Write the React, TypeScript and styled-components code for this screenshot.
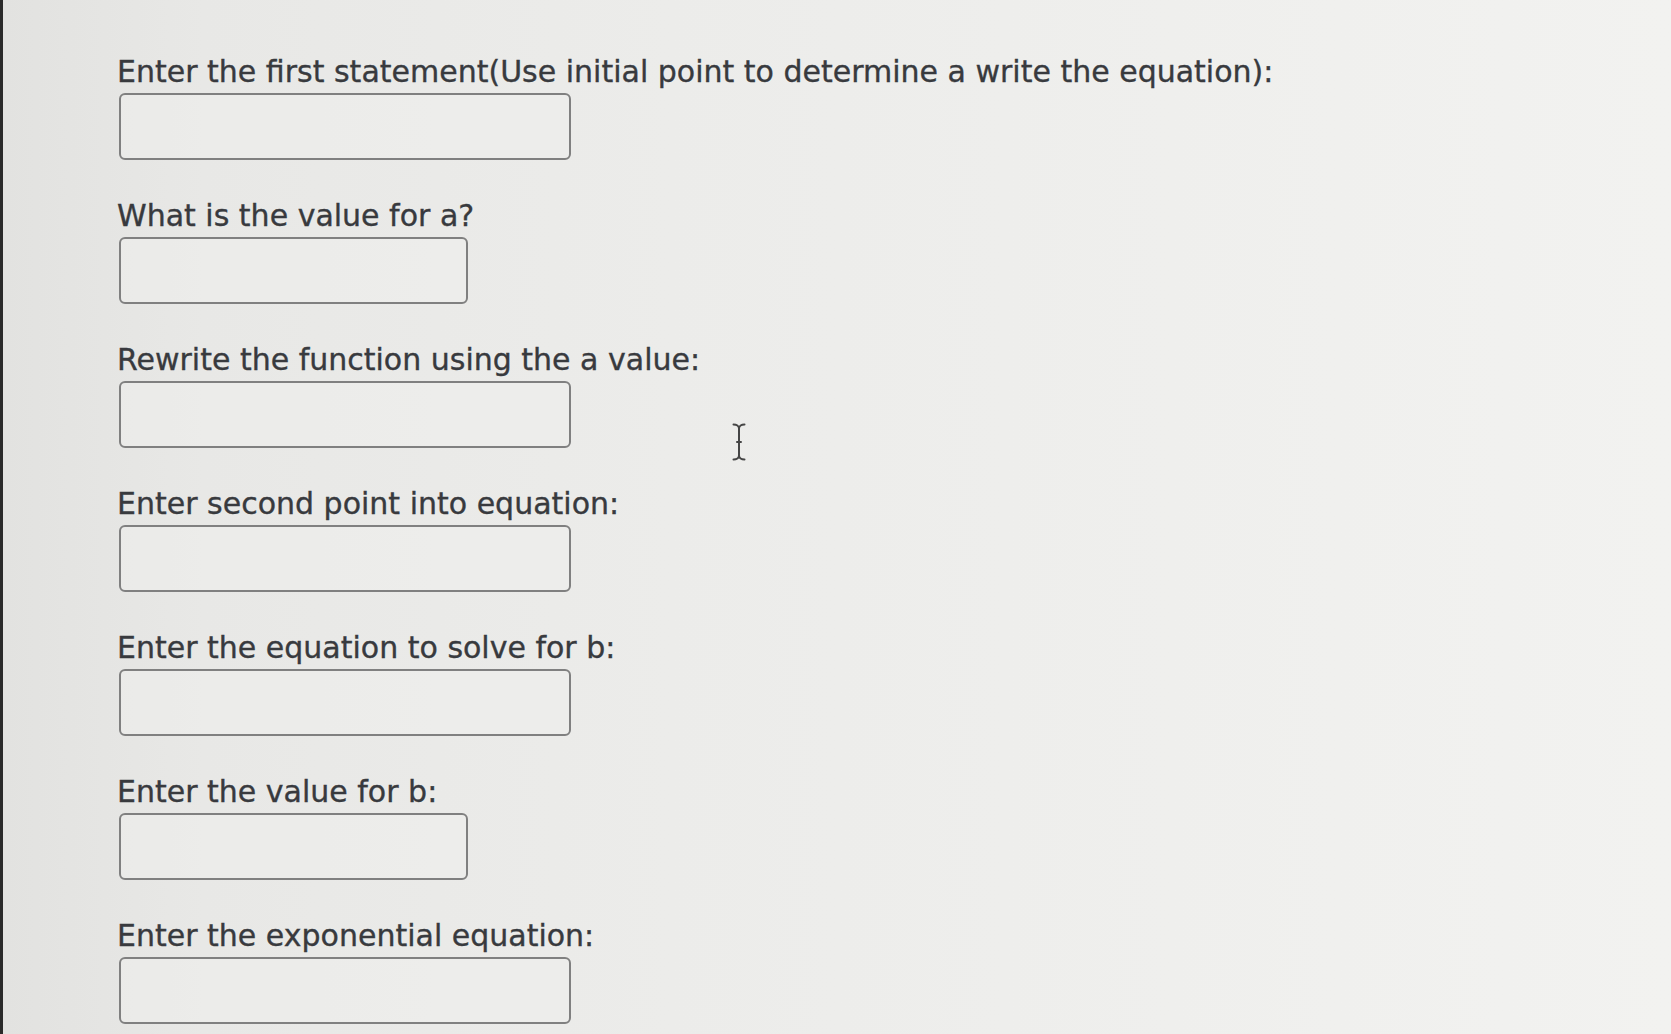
import React from "react";
import styled, { createGlobalStyle } from "styled-components";

const GlobalStyle = createGlobalStyle`
  html, body {
    margin: 0;
    padding: 0;
    height: 100%;
  }
  body {
    background: #ebebe9;
    font-family: "DejaVu Sans", sans-serif;
  }
  #root {
    min-height: 100%;
  }
`;

const Page = styled.main`
  position: relative;
  box-sizing: border-box;
  width: 1671px;
  height: 1034px;
  overflow: hidden;
  border-left: 3px solid #2a2a2a;
  background: linear-gradient(
    90deg,
    #e2e2e0 0%,
    #e8e8e6 12%,
    #ececea 40%,
    #efefed 70%,
    #f2f2f0 100%
  );
  padding: 55px 0 0 114px;
  display: flex;
  flex-direction: column;
  gap: 39px;
`;

const Field = styled.section`
  display: flex;
  flex-direction: column;
  gap: 4px;
`;

const Label = styled.label`
  font-family: "DejaVu Sans", "Verdana", sans-serif;
  font-size: 30px;
  line-height: 34px;
  color: #383a3e;
  -webkit-text-stroke: 0.35px #383a3e;
  white-space: nowrap;
`;

const AnswerBox = styled.input<{ $wide?: boolean }>`
  box-sizing: border-box;
  width: ${(p) => (p.$wide ? "452px" : "349px")};
  height: 67px;
  margin-left: 2px;
  border: 2px solid #808080;
  border-radius: 6px;
  background: rgba(238, 238, 236, 0.55);
  outline: none;
  padding: 0 10px;
  font-size: 22px;
`;

const Cursor = styled.svg`
  position: absolute;
  left: 729px;
  top: 423px;
  width: 14px;
  height: 38px;
`;

const fields: { label: string; wide: boolean }[] = [
  {
    label:
      "Enter the first statement(Use initial point to determine a write the equation):",
    wide: true,
  },
  { label: "What is the value for a?", wide: false },
  { label: "Rewrite the function using the a value:", wide: true },
  { label: "Enter second point into equation:", wide: true },
  { label: "Enter the equation to solve for b:", wide: true },
  { label: "Enter the value for b:", wide: false },
  { label: "Enter the exponential equation:", wide: true },
];

export default function App() {
  return (
    <>
      <GlobalStyle />
      <Page>
        {fields.map((f, i) => (
          <Field key={i}>
            <Label htmlFor={`answer-${i}`}>{f.label}</Label>
            <AnswerBox id={`answer-${i}`} type="text" $wide={f.wide} />
          </Field>
        ))}
        <Cursor viewBox="0 0 14 38" aria-hidden="true">
          <path
            d="M1.5 1.5 C4.5 1.5 7 3 7 5.5 C7 3 9.5 1.5 12.5 1.5 M7 5.5 V32.5 M1.5 36.5 C4.5 36.5 7 35 7 32.5 C7 35 9.5 36.5 12.5 36.5 M5 19 H9"
            fill="none"
            stroke="#454545"
            strokeWidth="2"
            strokeLinecap="round"
          />
        </Cursor>
      </Page>
    </>
  );
}
